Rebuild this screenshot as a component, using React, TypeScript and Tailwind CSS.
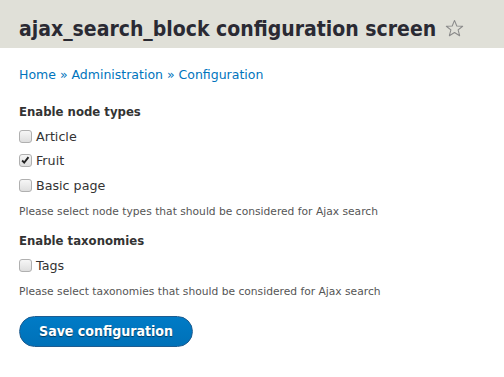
import React from "react";

function Box({ checked }: { checked?: boolean }) {
  return (
    <span className="relative inline-block w-[13px] h-[13px] rounded-[3px] border border-[#b0b0b0] bg-gradient-to-b from-[#f6f6f6] to-[#dedede] shrink-0">
      {checked && (
        <svg viewBox="0 0 13 13" className="absolute left-[0px] top-[0px] w-[11px] h-[11px]">
          <path d="M2.5 6.5 L5 9 L10 2.5" fill="none" stroke="#222" strokeWidth="2.2" />
        </svg>
      )}
    </span>
  );
}

function Row({ label, checked }: { label: string; checked?: boolean }) {
  return (
    <div className="flex items-center gap-[4px] h-[24.5px]">
      <Box checked={checked} />
      <span className="text-[12.7px] text-[#333]">{label}</span>
    </div>
  );
}

const cond = { fontFamily: '"DejaVu Sans Condensed", "DejaVu Sans", sans-serif' };

export default function App() {
  return (
    <div className="w-[504px] h-[377px] bg-white text-[#333]" style={{ fontFamily: '"DejaVu Sans", sans-serif' }}>
      <div className="h-[48px] bg-[#e0e0d8] flex items-center px-[19px] pt-[10px]">
        <h1 className="text-[21px] font-bold text-[#2a2a33] whitespace-nowrap leading-[28px]" style={cond}>ajax_search_block configuration screen</h1>
        <svg viewBox="0 0 20 20" className="ml-[9px] w-[19px] h-[19px] mt-[-2px] shrink-0">
          <path d="M10 1.5 L12.4 7.3 L18.6 7.6 L13.8 11.5 L15.4 17.6 L10 14.2 L4.6 17.6 L6.2 11.5 L1.4 7.6 L7.6 7.3 Z" fill="none" stroke="#8a8a8a" strokeWidth="1.1" strokeLinejoin="round" />
        </svg>
      </div>
      <div className="px-[19px]">
        <div className="mt-[17px] text-[12.5px] text-[#0074bd] leading-[20px]">Home » Administration » Configuration</div>
        <div className="mt-[17px] text-[13px] font-bold leading-[20px]" style={cond}>Enable node types</div>
        <div className="mt-[2px]">
          <Row label="Article" />
          <Row label="Fruit" checked />
          <Row label="Basic page" />
        </div>
        <div className="mt-[6px] text-[10.7px] text-[#555] leading-[16px]">Please select node types that should be considered for Ajax search</div>
        <div className="mt-[11px] text-[13px] font-bold leading-[20px]" style={cond}>Enable taxonomies</div>
        <div className="mt-[3px]">
          <Row label="Tags" />
        </div>
        <div className="mt-[6px] text-[10.7px] text-[#555] leading-[16px]">Please select taxonomies that should be considered for Ajax search</div>
        <button className="mt-[16px] w-[174px] h-[31px] rounded-full bg-gradient-to-b from-[#007bc6] to-[#0071b8] border border-[#1e5c90] text-white text-[14px] font-bold [text-shadow:0_1px_1px_rgba(0,0,0,0.5)]" style={cond}>Save configuration</button>
      </div>
    </div>
  );
}
